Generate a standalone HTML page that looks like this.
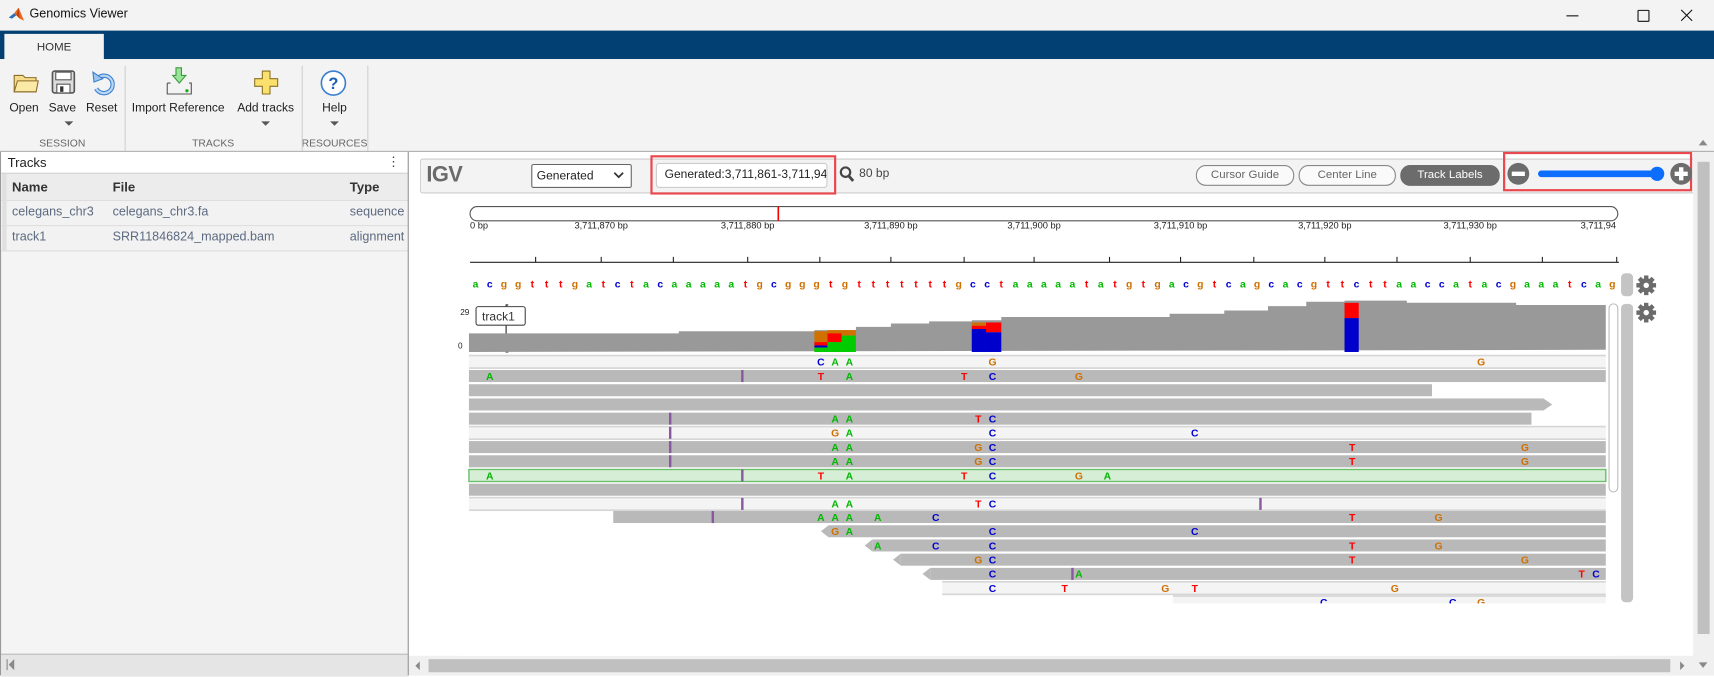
<!DOCTYPE html>
<html><head><meta charset="utf-8"><style>
html,body{margin:0;padding:0;width:1714px;height:675px;overflow:hidden;background:#fff}
#w{position:absolute;left:0;top:0;width:1568px;height:618px;transform:scale(1.09311);transform-origin:0 0;font-family:"Liberation Sans",sans-serif;background:#f3f3f3}
.a{position:absolute}
.lbl{position:absolute;font-size:11px;color:#222;white-space:nowrap;transform:translateX(-50%)}
.sec{position:absolute;font-size:9.5px;color:#666;transform:translateX(-50%);top:126px}
.arr{position:absolute;width:0;height:0;border-left:4px solid transparent;border-right:4px solid transparent;border-top:4px solid #555;transform:translateX(-50%);top:111px}
.sep{position:absolute;top:60px;height:78px;width:1px;background:#d0d0d0}
.pill{position:absolute;top:151px;height:17px;border:1px solid #888;border-radius:9px;font-size:10.5px;color:#666;text-align:center;line-height:17px;background:#fafafa}
</style></head><body><div id="w">
<div class="a" style="left:0;top:0;width:1568px;height:28px;background:#f3f3f3"></div>
<svg class="a" style="left:8px;top:7px" width="14" height="13" viewBox="0 0 14 13"><polygon points="0,9 5,5 7,7 3,10" fill="#2a6fb0"/><polygon points="5,5 9,0 14,12 10,10" fill="#e8681e"/><polygon points="7,7 9,0 10,10" fill="#c04010"/></svg>
<div class="a" style="left:27px;top:7px;font-size:11.5px;color:#111">Genomics Viewer</div>
<div class="a" style="left:1433px;top:14px;width:11px;height:1px;background:#111"></div>
<div class="a" style="left:1498px;top:9px;width:9px;height:9px;border:1px solid #111;border-radius:1px"></div>
<svg class="a" style="left:1537px;top:8px" width="12" height="12"><path d="M1 1L11 11M11 1L1 11" stroke="#111" stroke-width="1"/></svg>
<div class="a" style="left:0;top:28px;width:1568px;height:26px;background:#023f72"></div>
<div class="a" style="left:4px;top:31px;width:91px;height:24px;background:#f3f3f3;font-size:10.5px;color:#333;text-align:center;line-height:24px">HOME</div>
<svg class="a" style="left:12px;top:66px" width="24" height="20"><path d="M1 3h8l2 2h10v13H1z" fill="#f6dc8a" stroke="#8a6d2a"/><path d="M1 18l3-10h19l-2 10z" fill="#fbe9a6" stroke="#8a6d2a"/></svg>
<svg class="a" style="left:47px;top:64px" width="22" height="22"><rect x="1" y="1" width="20" height="20" rx="2" fill="#ddd" stroke="#555" stroke-width="1.5"/><rect x="4" y="2" width="14" height="7" fill="#fff" stroke="#555"/><rect x="5" y="13" width="12" height="8" fill="#fff" stroke="#555"/><rect x="8" y="15" width="3" height="5" fill="#333"/></svg>
<svg class="a" style="left:83px;top:64px" width="22" height="24"><path d="M6 8a8 8 0 1 1 -1 9" fill="none" stroke="#3a7fd0" stroke-width="4"/><path d="M6 8a8 8 0 1 1 -1 9" fill="none" stroke="#bcd8f5" stroke-width="2"/><path d="M2 2l1 9 8-3z" fill="#9cc6f0" stroke="#3a7fd0"/></svg>
<svg class="a" style="left:152px;top:61px" width="24" height="27"><path d="M9 1h5v7h4l-6 7-6-7h3z" fill="#9ae39a" stroke="#3a9a3a"/><path d="M1 15h3M21 15h2v10H1V15" fill="none" stroke="#555"/><circle cx="19" cy="22" r="1.5" fill="#2a2"/></svg>
<svg class="a" style="left:232px;top:64px" width="24" height="24"><path d="M8 1h7v7h7v7h-7v7H8v-7H1V8h7z" fill="#fbe06e" stroke="#8a7322"/></svg>
<svg class="a" style="left:293px;top:64px" width="24" height="24"><circle cx="12" cy="12" r="11" fill="#fff" stroke="#3a7fd0" stroke-width="1.5"/><text x="12" y="17.5" font-size="15" font-weight="bold" fill="#1a5fb4" text-anchor="middle" font-family="Liberation Sans">?</text></svg>
<div class="lbl" style="left:22px;top:93px">Open</div>
<div class="lbl" style="left:57px;top:93px">Save</div><div class="arr" style="left:63px"></div>
<div class="lbl" style="left:93px;top:93px">Reset</div>
<div class="lbl" style="left:163px;top:93px">Import Reference</div>
<div class="lbl" style="left:243px;top:93px">Add tracks</div><div class="arr" style="left:243px"></div>
<div class="lbl" style="left:306px;top:93px">Help</div><div class="arr" style="left:306px"></div>
<div class="sec" style="left:57px">SESSION</div>
<div class="sec" style="left:195px">TRACKS</div>
<div class="sec" style="left:306px">RESOURCES</div>
<div class="sep" style="left:114px"></div><div class="sep" style="left:276px"></div><div class="sep" style="left:336px"></div>
<div class="a" style="left:0;top:138px;width:1568px;height:1px;background:#aaa"></div>
<div class="a" style="left:0;top:139px;width:373px;height:479px;background:#f4f4f4;border-left:1px solid #999"></div>
<div class="a" style="left:1px;top:139px;width:372px;height:19px;background:#fff;border-bottom:1px solid #ccc"></div>
<div class="a" style="left:7px;top:142px;font-size:12px;color:#222">Tracks</div>
<div class="a" style="left:354px;top:141px;font-size:12px;color:#444">⋮</div>
<div class="a" style="left:1px;top:159px;width:372px;height:24px;background:#ececec;border-bottom:1px solid #ddd"></div>
<div class="a" style="left:11px;top:164px;font-size:12px;font-weight:bold;color:#333">Name</div>
<div class="a" style="left:103px;top:164px;font-size:12px;font-weight:bold;color:#333">File</div>
<div class="a" style="left:320px;top:164px;font-size:12px;font-weight:bold;color:#333">Type</div>
<div class="a" style="left:1px;top:184px;width:372px;height:22px;background:#f2f2f2;border-bottom:1px solid #ddd"></div>
<div class="a" style="left:1px;top:207px;width:372px;height:22px;background:#f2f2f2;border-bottom:1px solid #ddd"></div>
<div class="a" style="left:2px;top:159px;width:4px;height:70px;background:#e0e0e0"></div>
<div class="a" style="left:11px;top:188px;font-size:11.5px;color:#5c6a80">celegans_chr3</div>
<div class="a" style="left:103px;top:188px;font-size:11.5px;color:#5c6a80">celegans_chr3.fa</div>
<div class="a" style="left:320px;top:188px;font-size:11.5px;color:#5c6a80;width:53px;overflow:hidden">sequence</div>
<div class="a" style="left:11px;top:211px;font-size:11.5px;color:#5c6a80">track1</div>
<div class="a" style="left:103px;top:211px;font-size:11.5px;color:#5c6a80">SRR11846824_mapped.bam</div>
<div class="a" style="left:320px;top:211px;font-size:11.5px;color:#5c6a80;width:53px;overflow:hidden">alignment</div>
<div class="a" style="left:1px;top:598px;width:372px;height:20px;background:#e5e5e5;border-top:1px solid #bbb"></div>
<div class="a" style="left:6px;top:603px;width:1px;height:10px;background:#888"></div>
<div class="a" style="left:8px;top:603px;width:0;height:0;border-top:5px solid transparent;border-bottom:5px solid transparent;border-right:5px solid #888"></div>
<div class="a" style="left:373px;top:139px;width:1px;height:479px;background:#888"></div>
<div class="a" style="left:374px;top:139px;width:1175px;height:461px;background:#fff"></div>
<div class="a" style="left:1549px;top:139px;width:19px;height:479px;background:#f0f0f0"></div>
<div class="a" style="left:1553px;top:148px;width:11px;height:432px;background:#c0c0c0"></div>
<div class="a" style="left:1554px;top:128px;width:0;height:0;border-left:4px solid transparent;border-right:4px solid transparent;border-bottom:5px solid #888"></div>
<div class="a" style="left:1554px;top:606px;width:0;height:0;border-left:4px solid transparent;border-right:4px solid transparent;border-top:5px solid #888"></div>
<div class="a" style="left:374px;top:600px;width:1175px;height:18px;background:#f0f0f0"></div>
<div class="a" style="left:392px;top:603px;width:1136px;height:12px;background:#c0c0c0"></div>
<div class="a" style="left:380px;top:605px;width:0;height:0;border-top:4px solid transparent;border-bottom:4px solid transparent;border-right:4px solid #888"></div>
<div class="a" style="left:1537px;top:605px;width:0;height:0;border-top:4px solid transparent;border-bottom:4px solid transparent;border-left:4px solid #888"></div>
<div class="a" style="left:384px;top:145px;width:1164px;height:30px;background:#f3f3f3;border:1px solid #ccc;border-right:none;border-radius:3px 0 0 3px"></div>
<div class="a" style="left:390px;top:149px;font-size:20px;font-weight:bold;color:#6a6a6a;letter-spacing:-0.5px">IGV</div>
<div class="a" style="left:486px;top:150px;width:90px;height:20px;background:#fff;border:1px solid #666;border-radius:2px;font-size:11px;line-height:20px;color:#222;text-indent:4px">Generated</div>
<svg class="a" style="left:561px;top:156px" width="10" height="8"><path d="M1 2l4 4 4-4" stroke="#333" stroke-width="1.6" fill="none"/></svg>
<div class="a" style="left:595px;top:142px;width:166px;height:32px;border:2px solid #e8484e"></div>
<div class="a" style="left:600px;top:149px;width:155px;height:21px;background:#fff;border:1px solid #ccc;border-radius:3px;font-size:11px;line-height:21px;color:#222;text-indent:7px;overflow:hidden;white-space:nowrap">Generated:3,711,861-3,711,94</div>
<svg class="a" style="left:768px;top:152px" width="14" height="15"><circle cx="5.5" cy="5.5" r="4.3" fill="none" stroke="#444" stroke-width="2"/><path d="M8.5 9l4 4.5" stroke="#444" stroke-width="2.6"/></svg>
<div class="a" style="left:786px;top:153px;font-size:11px;color:#444">80 bp</div>
<div class="pill" style="left:1094px;width:88px">Cursor Guide</div>
<div class="pill" style="left:1188px;width:87px">Center Line</div>
<div class="pill" style="left:1281px;width:89px;background:#6c6c6c;border-color:#6c6c6c;color:#fff">Track Labels</div>
<div class="a" style="left:1375px;top:139px;width:173px;height:36px;border:2px solid #e8484e;box-sizing:border-box"></div>
<svg class="a" style="left:1378px;top:148px" width="170" height="22"><circle cx="11" cy="11" r="10" fill="#6c6c6c"/><rect x="5" y="9" width="12" height="4" fill="#fff"/><line x1="32" y1="11" x2="138" y2="11" stroke="#0d6efd" stroke-width="6" stroke-linecap="round"/><circle cx="138" cy="11" r="6.5" fill="#0d6efd"/><circle cx="160" cy="11" r="10" fill="#6c6c6c"/><rect x="154" y="9" width="12" height="4" fill="#fff"/><rect x="158" y="5" width="4" height="12" fill="#fff"/></svg>
<svg class="a" style="left:374px;top:139px;overflow:hidden" width="1175" height="461" viewBox="374 139 1175 461" font-family="Liberation Sans" font-weight="bold">
<rect x="430" y="189" width="1050" height="13" rx="6.5" fill="#fff" stroke="#555"/>
<line x1="712" y1="189" x2="712" y2="202" stroke="#f00" stroke-width="1.5"/>
<g font-weight="normal" font-size="8.5" fill="#222" text-anchor="middle">
<text x="430" y="209" text-anchor="start">0 bp</text><text x="550" y="209">3,711,870 bp</text><text x="684" y="209">3,711,880 bp</text><text x="815" y="209">3,711,890 bp</text><text x="946" y="209">3,711,900 bp</text><text x="1080" y="209">3,711,910 bp</text><text x="1212" y="209">3,711,920 bp</text><text x="1345" y="209">3,711,930 bp</text><text x="1446" y="209" text-anchor="start">3,711,94</text>
</g>
<line x1="430" y1="240" x2="1481" y2="240" stroke="#222"/>
<g stroke="#222"><path d="M490 235v5M550 235v5M616 235v5M684 235v5M750 235v5M815 235v5M882 235v5M946 235v5M1015 235v5M1080 235v5M1147 235v5M1212 235v5M1278 235v5M1345 235v5M1411 235v5M1479 235v5"/></g>
<g id="seq" font-size="9.5" text-anchor="middle"></g>
<rect x="1483" y="250" width="11" height="21" rx="4" fill="#c4c4c4"/>
<rect x="1483" y="278" width="11" height="273" rx="4" fill="#c4c4c4"/>
<rect x="1472" y="278" width="8" height="172" rx="4" fill="#fff" stroke="#bbb"/>
<g fill="#6b6b6b" id="gears"></g>
<path d="M465 279h-2v43h2" fill="none" stroke="#222"/>
<text x="421" y="288" font-size="7.5" font-weight="normal" fill="#222">29</text>
<text x="419" y="319" font-size="7.5" font-weight="normal" fill="#222">0</text>
<path d="M429 322V305h192v-2h124v-1h38v-3h32v-3h35v-2h39v-1h27v-3h154v-3h50v-3h40v-4h35v-4h35v-1h57v2h100v2h82v41z" fill="#999"/>
<rect x="745" y="303" width="12" height="19" fill="#d07000"/><rect x="745" y="313" width="12" height="3" fill="#f00"/><rect x="745" y="316" width="12" height="2" fill="#00c"/><rect x="745" y="318" width="12" height="4" fill="#0c0"/>
<rect x="757" y="302" width="13" height="20" fill="#d07000"/><rect x="757" y="305" width="13" height="8" fill="#f00"/><rect x="757" y="313" width="13" height="9" fill="#0c0"/>
<rect x="770" y="302" width="13" height="5" fill="#d07000"/><rect x="770" y="307" width="13" height="15" fill="#0c0"/>
<rect x="889" y="295" width="13" height="3" fill="#d07000"/><rect x="889" y="298" width="13" height="3" fill="#f00"/><rect x="889" y="301" width="13" height="21" fill="#00c"/>
<rect x="902" y="295" width="14" height="9" fill="#f00"/><rect x="902" y="304" width="14" height="18" fill="#00c"/>
<rect x="1230" y="277" width="13" height="14" fill="#f00"/><rect x="1230" y="291" width="13" height="31" fill="#00c"/>
<rect x="435.5" y="280.5" width="45" height="17" rx="2" fill="#fff" stroke="#444"/>
<text x="441" y="293" font-size="11" font-weight="normal" fill="#333">track1</text>
<g id="reads"></g>
<rect x="420" y="552" width="1060" height="50" fill="#fff"/>
</svg>
<script>
var NS="http://www.w3.org/2000/svg";
function el(p,t,a,txt){var e=document.createElementNS(NS,t);for(var k in a)e.setAttribute(k,a[k]);if(txt)e.textContent=txt;p.appendChild(e);return e;}
var col={a:"#00b800",c:"#0000d0",g:"#d07000",t:"#f00",A:"#00b800",C:"#0000d0",G:"#d07000",T:"#f00"};
var s="acggtttgatctacaaaaatgcgggtgtttttttgcctaaaaatatgtgacgtcagcacgttcttaaccatacgaaatcag";
var sg=document.getElementById("seq");
for(var i=0;i<s.length;i++){el(sg,"text",{x:435+i*13.0,y:263,fill:col[s[i]]},s[i]);}
var gg=document.getElementById("gears");
[261,286].forEach(function(cy){var cx=1506;for(var k=0;k<8;k++){el(gg,"rect",{x:cx-2,y:cy-9,width:4,height:5,transform:"rotate("+(k*45)+" "+cx+" "+cy+")"});}
el(gg,"circle",{cx:cx,cy:cy,r:6.5});el(gg,"circle",{cx:cx,cy:cy,r:2.5,fill:"#fff"});});
var R=document.getElementById("reads");
var rows=[
[331,429,1469,"l","",[[751,"C"],[764,"A"],[777,"A"],[908,"G"],[1355,"G"]],[]],
[344,429,1469,"g","",[[448,"A"],[751,"T"],[777,"A"],[882,"T"],[908,"C"],[987,"G"]],[679]],
[357,429,1310,"g","",[],[]],
[370,429,1412,"g","r",[],[]],
[383,429,1401,"g","",[[764,"A"],[777,"A"],[895,"T"],[908,"C"]],[613]],
[396,429,1469,"l","",[[764,"G"],[777,"A"],[908,"C"],[1093,"C"]],[613]],
[409,429,1469,"g","",[[764,"A"],[777,"A"],[895,"G"],[908,"C"],[1237,"T"],[1395,"G"]],[613]],
[422,429,1469,"g","",[[764,"A"],[777,"A"],[895,"G"],[908,"C"],[1237,"T"],[1395,"G"]],[613]],
[435,429,1469,"h","",[[448,"A"],[751,"T"],[777,"A"],[882,"T"],[908,"C"],[987,"G"],[1013,"A"]],[679]],
[448,429,1469,"g","",[],[]],
[461,429,1469,"l","",[[764,"A"],[777,"A"],[895,"T"],[908,"C"]],[679,1153]],
[473,561,1469,"g","",[[751,"A"],[764,"A"],[777,"A"],[803,"A"],[856,"C"],[1237,"T"],[1316,"G"]],[652]],
[486,758,1469,"g","l",[[764,"G"],[777,"A"],[908,"C"],[1093,"C"]],[]],
[499,798,1469,"g","l",[[803,"A"],[856,"C"],[908,"C"],[1237,"T"],[1316,"G"]],[]],
[512,824,1469,"g","l",[[895,"G"],[908,"C"],[1237,"T"],[1395,"G"]],[]],
[525,851,1469,"g","l",[[908,"C"],[987,"A"],[1447,"T"],[1460,"C"]],[981]],
[538,862,1469,"l","",[[908,"C"],[974,"T"],[1066,"G"],[1093,"T"],[1276,"G"]],[]],
[551,1073,1469,"l","",[[1211,"C"],[1329,"C"],[1355,"G"]],[]]
];
rows.forEach(function(r){var y=r[0]-5.5,h=11;
 if(r[3]=="g"){el(R,"rect",{x:r[1],y:y,width:r[2]-r[1],height:h,fill:"#b9b9b9"});}
 else if(r[3]=="l"){el(R,"rect",{x:r[1],y:y,width:r[2]-r[1],height:h,fill:"#f4f4f4"});el(R,"rect",{x:r[1],y:y-1,width:r[2]-r[1],height:1.5,fill:"#d6d6d6"});el(R,"rect",{x:r[1],y:y+h-0.5,width:r[2]-r[1],height:1.5,fill:"#d6d6d6"});}
 else {el(R,"rect",{x:r[1],y:y,width:r[2]-r[1],height:h,fill:"#d6eed6",stroke:"#6cc06c","stroke-width":1.3});}
 if(r[4]=="r")el(R,"path",{d:"M"+r[2]+" "+y+"l8 5.5l-8 5.5z",fill:"#b9b9b9"});
 if(r[4]=="l")el(R,"path",{d:"M"+r[1]+" "+y+"l-7 5.5l7 5.5z",fill:"#b9b9b9"});
 r[6].forEach(function(px){el(R,"rect",{x:px-1,y:y,width:2.2,height:h,fill:"#8a58a0"});});
 r[5].forEach(function(l){el(R,"text",{x:l[0],y:r[0]+3.5,"font-size":9.5,"text-anchor":"middle",fill:col[l[1]]},l[1]);});
});
</script>
</div></body></html>
